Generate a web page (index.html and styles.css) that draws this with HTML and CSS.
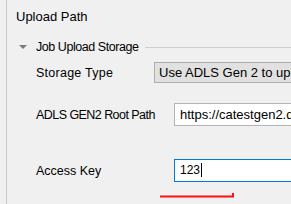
FILE: index.html
```html
<!DOCTYPE html>
<html lang="en">
<head>
    <meta charset="UTF-8">
    <title>Upload Path</title>
<link rel="stylesheet" href="styles.css">
</head>
<body>
    <div class="panel">
        <div class="title">Upload Path</div>
        <div class="group">
            <span class="arrow"></span>
            <span class="group_name">Job Upload Storage</span>
            <span class="rule"></span>
        </div>
        <div class="row row_type">
            <span class="label">Storage Type</span>
            <div class="combo">Use ADLS Gen 2 to upload job artifacts</div>
        </div>
        <div class="row row_path">
            <span class="label">ADLS GEN2 Root Path</span>
            <div class="text">https://catestgen2.dfs.core.windows.net/</div>
        </div>
        <div class="row row_key">
            <span class="label">Access Key</span>
            <div class="text focus">123<span class="caret"></span></div>
        </div>
        <svg class="mark" width="80" height="8" viewBox="0 0 80 8">
            <path d="M1 5.5 H74 V2" fill="none" stroke="#ff1010" stroke-width="2"/>
        </svg>
    </div>
</body>
</html>
```

FILE: styles.css
```css
*{
    box-sizing: border-box;
}
body{
    margin: 0;
    background: #f0f0f0;
    font-family: "Liberation Sans", Arial, sans-serif;
    font-size: 12.5px;
    color: #000;
    overflow: hidden;
}
.panel{
    position: relative;
    margin-left: 6px;
    height: 204px;
    border-left: 1px solid #c8c8c8;
    padding-left: 9px;
}
.title{
    padding-top: 9px;
    font-size: 13px;
    line-height: 16px;
}
.group{
    display: flex;
    align-items: center;
    margin-top: 14px;
    height: 16px;
    padding-left: 3px;
}
.arrow{
    width: 0;
    height: 0;
    border-left: 4px solid transparent;
    border-right: 4px solid transparent;
    border-top: 4px solid #7a7a7a;
    margin-right: 9px;
}
.group_name{
    letter-spacing: -0.45px;
}
.rule{
    flex: 1;
    height: 1px;
    background: #cfcfcf;
    margin-left: 7px;
}
.row{
    display: flex;
    align-items: center;
    padding-left: 20px;
}
.label{
    white-space: nowrap;
}
.row_type{
    margin-top: 7px;
    height: 21px;
}
.row_type .label{
    width: 118px;
    letter-spacing: 0.25px;
}
.combo{
    flex: 1;
    height: 21px;
    line-height: 19px;
    padding-left: 4px;
    background: #e1e1e1;
    border: 1px solid #adadad;
    border-right: none;
    white-space: nowrap;
    overflow: hidden;
    font-size: 13px;
}
.row_path{
    margin-top: 20px;
    height: 23px;
}
.row_path .label{
    letter-spacing: -0.55px;
}
.row_key{
    margin-top: 33px;
    height: 23px;
}
.row_path .label,
.row_key .label{
    width: 138px;
}
.text{
    flex: 1;
    height: 23px;
    line-height: 21px;
    padding-left: 5px;
    background: #fff;
    border: 1px solid #b4b4b4;
    border-right: none;
    white-space: nowrap;
    overflow: hidden;
    font-size: 13px;
}
.text.focus{
    border-color: #0078d7;
    font-size: 12px;
}
.caret{
    display: inline-block;
    width: 1px;
    height: 14px;
    background: #000;
    vertical-align: -3px;
    margin-left: 1px;
}
.mark{
    position: absolute;
    left: 152px;
    top: 191px;
}
```
